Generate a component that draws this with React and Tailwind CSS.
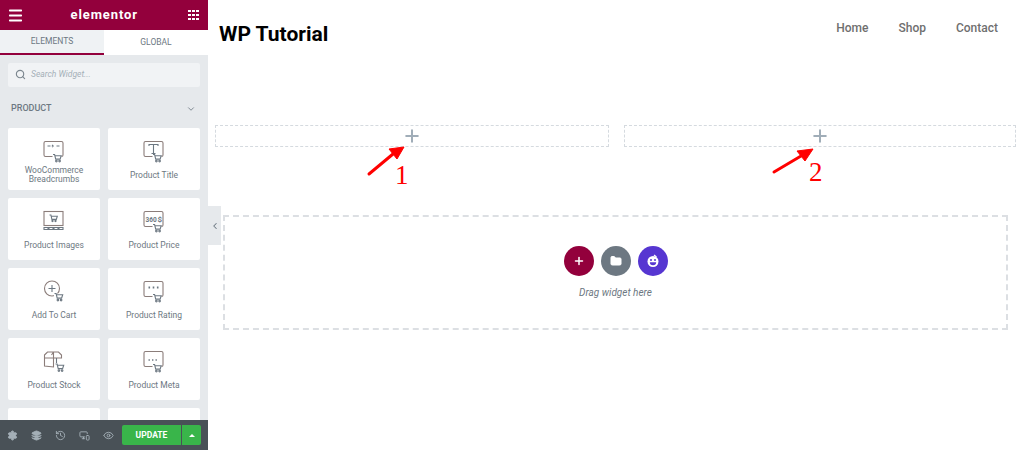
import React from 'react';
import { Settings, Layers, History, MonitorSmartphone, Eye, Search, ChevronDown, ChevronLeft, Plus, Folder, Menu } from 'lucide-react';

const Cart = ({ x, y }) => (
  <g transform={`translate(${x} ${y})`} strokeWidth="1.1">
    <path d="M-.5 0H8.5V4H-.5z" fill="#fff" stroke="none" />
    <path d="M0 0h1.6l1.1 4.6h4.4l1.1-3.4H2" fill="#fff" />
    <circle cx="3.4" cy="6.6" r=".8" />
    <circle cx="6.6" cy="6.6" r=".8" />
  </g>
);

const WidgetIcon = ({ children }) => (
  <svg width="26" height="26" viewBox="0 0 26 26" fill="none" stroke="#6d7882" strokeWidth="1.1" className="mb-[3px]">
    {children}
  </svg>
);

const Screen = () => <rect x="3" y="2.5" width="19" height="15" rx="1.5" stroke="#8b7d7a" />;

const widgets = [
  {
    name: <>WooCommerce<br />Breadcrumbs</>,
    two: true,
    icon: (
      <WidgetIcon>
        <Screen />
        <path d="M6.5 7h3M11 5.8l1.2 1.2-1.2 1.2M15.5 7h3" />
        <Cart x={12} y={15.5} />
      </WidgetIcon>
    ),
  },
  {
    name: 'Product Title',
    icon: (
      <WidgetIcon>
        <Screen />
        <path d="M8 7V5.5h9V7M12.5 5.5v9M10.5 14.5h4" />
        <Cart x={12} y={15.5} />
      </WidgetIcon>
    ),
  },
  {
    name: 'Product Images',
    icon: (
      <WidgetIcon>
        <rect x="3" y="2.5" width="19" height="14" stroke="#8b7d7a" />
        <path d="M8.5 6h1.4l1 4.4h4.4l1-3.2h-6" />
        <circle cx="11.5" cy="12" r=".6" />
        <circle cx="14.5" cy="12" r=".6" />
        <path d="M3 18.5h4v2H3zM8 18.5h4v2H8zM13 18.5h4v2h-4zM18 18.5h4v2h-4z" />
      </WidgetIcon>
    ),
  },
  {
    name: 'Product Price',
    icon: (
      <WidgetIcon>
        <Screen />
        <text x="4.5" y="12.5" fontSize="6.5" fontFamily="Roboto, sans-serif" fontWeight="700" fill="#6d7882" stroke="none">360</text>
        <text x="16.5" y="13" fontSize="8" fontFamily="Roboto, sans-serif" fontWeight="700" fill="#6d7882" stroke="none">$</text>
        <Cart x={12} y={15.5} />
      </WidgetIcon>
    ),
  },
  {
    name: 'Add To Cart',
    icon: (
      <WidgetIcon>
        <circle cx="11" cy="9.5" r="7.5" stroke="#8b7d7a" />
        <path d="M11 6v7M7.5 9.5h7" />
        <Cart x={13.5} y={14.5} />
      </WidgetIcon>
    ),
  },
  {
    name: 'Product Rating',
    icon: (
      <WidgetIcon>
        <Screen />
        <path d="M7.5 8.5h1.6M11.7 8.5h1.6M15.9 8.5h1.6" strokeWidth="2.2" />
        <Cart x={12} y={15.5} />
      </WidgetIcon>
    ),
  },
  {
    name: 'Product Stock',
    icon: (
      <WidgetIcon>
        <path d="M3.5 6l3-3h11l3 3v3h-17zM3.5 9v8l9 1V9M12.5 3v6M12.5 3l-2 3" stroke="#8b7d7a" />
        <path d="M15.5 9v5" />
        <Cart x={14.5} y={15} />
      </WidgetIcon>
    ),
  },
  {
    name: 'Product Meta',
    icon: (
      <WidgetIcon>
        <Screen />
        <path d="M7.5 11h1.4M11 11h1.4M14.5 11h1.4" strokeWidth="1.6" />
        <Cart x={12} y={15.5} />
      </WidgetIcon>
    ),
  },
  { name: '', icon: null },
  { name: '', icon: null },
];

const App = () => {
  return (
    <div className="relative flex h-[450px] w-[1024px] overflow-hidden bg-white font-['Roboto',sans-serif]">
      <aside className="flex h-full w-[208px] shrink-0 flex-col bg-[#e6e9ec]">
        <div className="flex h-[30px] shrink-0 items-center justify-between bg-[#93003c] pl-[7px] pr-[9px] text-white">
          <Menu size={17} strokeWidth={2.6} />
          <span className="mr-[4px] text-[13px] font-bold tracking-[0.9px]">elementor</span>
          <div className="grid grid-cols-3 gap-[1.5px]">
            {[...Array(9)].map((_, i) => (
              <span key={i} className="h-[2.5px] w-[2.5px] bg-white" />
            ))}
          </div>
        </div>
        <div className="flex h-[25px] shrink-0 text-[8.5px] text-[#6d7882]">
          <div className="flex w-[104px] items-center justify-center border-b-2 border-[#93003c] bg-[#eff2f4]">ELEMENTS</div>
          <div className="flex w-[104px] items-center justify-center bg-white">GLOBAL</div>
        </div>
        <div className="mx-[8px] mt-[8px] flex h-[24px] shrink-0 items-center gap-[5px] rounded-[2px] bg-[#f1f3f5] pb-[1px] pl-[7px] text-[8.5px] italic text-[#a4afb7]">
          <Search size={11} strokeWidth={2.5} className="text-[#7d8890]" />
          <span>Search Widget...</span>
        </div>
        <div className="mx-[11px] mt-[16px] flex h-[12px] shrink-0 items-center justify-between pr-[1px] text-[9px] font-medium text-[#6d7882]">
          <span>PRODUCT</span>
          <ChevronDown size={10} strokeWidth={2} />
        </div>
        <div className="mx-[8px] mt-[13px] min-h-0 flex-1 overflow-hidden">
          <div className="grid grid-cols-[92px_92px] gap-x-[8px] gap-y-[8px]">
            {widgets.map((w, i) => (
              <div key={i} className="flex h-[62px] flex-col items-center rounded-[2px] bg-white pt-[11px] text-center text-[8.5px] leading-[9px] text-[#6d7882]">
                {w.icon}
                <span className={w.two ? '-mt-[2px]' : 'mt-[3px]'}>{w.name}</span>
              </div>
            ))}
          </div>
        </div>
        <div className="flex h-[30px] shrink-0 items-center bg-[#495157] pl-[7px] pr-[7px] text-[#a4afb7]">
          <div className="flex w-[115px] items-center gap-[13px]">
            <Settings size={11} fill="currentColor" />
            <Layers size={11} fill="currentColor" />
            <History size={11} />
            <MonitorSmartphone size={11} />
            <Eye size={11} />
          </div>
          <div className="flex h-[20px] w-[79px] text-white">
            <div className="flex w-[59px] items-center justify-center rounded-l-[2px] bg-[#39b54a] text-[8.5px] font-bold">UPDATE</div>
            <div className="ml-px flex flex-1 items-center justify-center rounded-r-[2px] bg-[#39b54a]">
              <span className="border-x-[3px] border-b-[3px] border-x-transparent border-b-white" />
            </div>
          </div>
        </div>
      </aside>

      <main className="flex min-w-0 flex-1 flex-col">
        <header className="flex h-[66px] shrink-0 items-center justify-between pl-[11px] pr-[26px]">
          <h1 className="mt-[4px] text-[21px] font-bold text-black">WP Tutorial</h1>
          <nav className="flex gap-[30px] pb-[10px] text-[12px] font-medium text-[#6f6f6f]">
            <span>Home</span>
            <span>Shop</span>
            <span>Contact</span>
          </nav>
        </header>
        <div className="ml-[7px] mr-[8px] mt-[59px] grid h-[22px] grid-cols-[394px_392px] gap-x-[15px]">
          {[0, 1].map((i) => (
            <div key={i} className="flex items-center justify-center border border-dashed border-[#d5dadf]">
              <Plus size={20} strokeWidth={2.4} className="text-[#a0adb8]" />
            </div>
          ))}
        </div>
        <div className="ml-[15px] mt-[68px] flex h-[115px] w-[785px] flex-col items-center justify-center border-2 border-dashed border-[#dcdfe3] pt-[1px]">
          <div className="flex gap-[7px]">
            <div className="flex h-[30px] w-[30px] items-center justify-center rounded-full bg-[#93003c] text-white">
              <Plus size={12} strokeWidth={3} />
            </div>
            <div className="flex h-[30px] w-[30px] items-center justify-center rounded-full bg-[#6d7882] text-white">
              <Folder size={12} fill="currentColor" />
            </div>
            <div className="flex h-[30px] w-[30px] items-center justify-center rounded-full bg-[#5636d1]">
              <svg width="14" height="14" viewBox="0 0 14 14">
                <circle cx="7" cy="7.5" r="5.5" fill="#fff" />
                <path d="M8 1l2.5 2" stroke="#fff" strokeWidth="1.2" />
                <circle cx="5" cy="6" r="1" fill="#5636d1" />
                <circle cx="9" cy="6" r="1" fill="#5636d1" />
                <path d="M3.8 8.2h6.4a3.2 3 0 0 1-6.4 0z" fill="#5636d1" />
              </svg>
            </div>
          </div>
          <p className="mt-[9px] text-[10px] italic text-[#6d7882]">Drag widget here</p>
        </div>
      </main>

      {/* collapse handle */}
      <div className="absolute left-[208px] top-[206px] flex h-[39px] w-[13px] items-center justify-center bg-[#e6e9ec] text-[#6d7882]">
        <ChevronLeft size={10} strokeWidth={2.5} />
      </div>

      {/* red annotations */}
      <svg className="pointer-events-none absolute left-0 top-0" width="1024" height="450">
        <path d="M369 174L393 154" stroke="#f00" strokeWidth="3" strokeLinecap="round" />
        <path d="M404 147L389 149L397 159Z" fill="#f00" stroke="#f00" strokeLinejoin="round" />
        <path d="M774 172L801 156" stroke="#f00" strokeWidth="3" strokeLinecap="round" />
        <path d="M813 149L797 151L805 161Z" fill="#f00" stroke="#f00" strokeLinejoin="round" />
      </svg>
      <span className="absolute left-[395px] top-[160px] font-['Liberation_Serif',serif] text-[27px] leading-[30px] text-[#f00]">1</span>
      <span className="absolute left-[809px] top-[157px] font-['Liberation_Serif',serif] text-[27px] leading-[30px] text-[#f00]">2</span>
    </div>
  );
};

export default App;
